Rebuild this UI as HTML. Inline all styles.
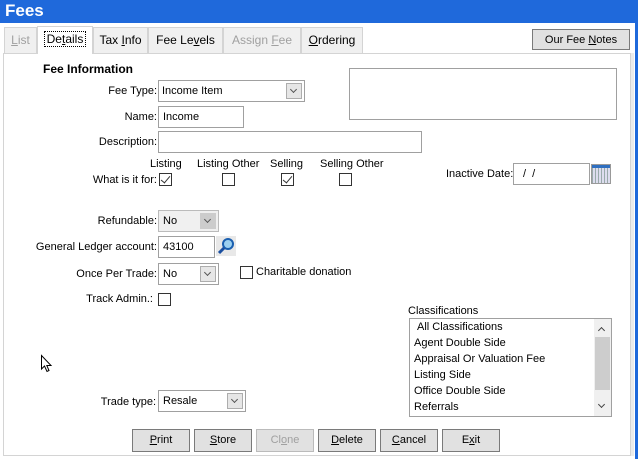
<!DOCTYPE html>
<html><head><style>
*{box-sizing:border-box;margin:0;padding:0}
body{width:638px;height:459px;background:#fff;font-family:"Liberation Sans",sans-serif;font-size:11px;color:#000;position:relative;overflow:hidden}
.a{position:absolute;white-space:nowrap}
.box{position:absolute;border:1px solid #a0a0a0;background:#fff}
.tab{position:absolute;top:27px;height:26px;background:#f0f0f0;border:1px solid #d4d4d4;border-bottom:none;font-size:12px;text-align:center;line-height:25px}
.btn{position:absolute;background:#e1e1e1;border:1px solid #7a7a7a;text-align:center;font-size:11px;line-height:20px}
.dd{position:absolute;top:2px;right:2px;width:16px;height:16px;border:1px solid #adadad;background:#e6e6e6}
.dd:after{content:"";position:absolute;left:4px;top:3px;width:4px;height:4px;border-right:1px solid #555;border-bottom:1px solid #555;transform:rotate(45deg)}
.cb{position:absolute;width:13px;height:13px;border:1px solid #333;background:#fff}
.ck:after{content:"";position:absolute;left:3px;top:0px;width:4px;height:8px;border-right:1px solid #333;border-bottom:1px solid #333;transform:rotate(40deg)}
.r{text-align:right}
u{text-decoration:underline}
.ar{position:absolute;left:5px;width:5px;height:5px;border-left:1px solid #444;border-top:1px solid #444}
</style></head><body>
<div class="a" style="left:0;top:0;width:638px;height:23px;background:#1f69db"></div>
<div class="a" style="left:5px;top:1px;color:#fff;font-weight:bold;font-size:17px">Fees</div>
<div class="a" style="left:635px;top:0;width:3px;height:459px;background:#1f69db"></div>
<div class="a" style="left:3px;top:53px;width:628px;height:403px;border:1px solid #d4d4d4;background:#fff"></div>
<div class="a" style="left:631px;top:53px;width:3px;height:403px;background:#ececec"></div>
<div class="tab" style="left:4px;width:33px;color:#a0a0a0"><u>L</u>ist</div>
<div class="tab" style="left:37px;top:26px;width:56px;height:28px;background:#fff;z-index:2"><span style="border:1px dotted #000;padding:0 2px">De<u>t</u>ails</span></div>
<div class="tab" style="left:93px;width:55px">Tax <u>I</u>nfo</div>
<div class="tab" style="left:148px;width:75px">Fee Le<u>v</u>els</div>
<div class="tab" style="left:223px;width:78px;color:#a0a0a0">Assign <u>F</u>ee</div>
<div class="tab" style="left:301px;width:62px"><u>O</u>rdering</div>
<div class="btn" style="left:532px;top:29px;width:98px;height:21px;font-size:11px">Our Fee <u>N</u>otes</div>

<div class="a" style="left:43px;top:62px;font-weight:bold;font-size:12px">Fee Information</div>
<div class="a r" style="left:60px;width:97px;top:85px">Fee Type:</div>
<div class="box" style="left:158px;top:80px;width:147px;height:22px"><span class="a" style="left:3px;top:4px">Income Item</span><div class="dd"></div></div>
<div class="a r" style="left:60px;width:97px;top:111px">Name:</div>
<div class="box" style="left:158px;top:106px;width:86px;height:22px"><span class="a" style="left:4px;top:4px">Income</span></div>
<div class="a r" style="left:40px;width:117px;top:136px">Description:</div>
<div class="box" style="left:158px;top:131px;width:264px;height:22px"></div>
<div class="box" style="left:349px;top:68px;width:268px;height:52px"></div>

<div class="a" style="left:150px;top:158px">Listing</div>
<div class="a" style="left:197px;top:158px">Listing Other</div>
<div class="a" style="left:270px;top:158px">Selling</div>
<div class="a" style="left:320px;top:158px">Selling Other</div>
<div class="a r" style="left:40px;width:117px;top:174px">What is it for:</div>
<div class="cb ck" style="left:159px;top:173px"></div>
<div class="cb" style="left:222px;top:173px"></div>
<div class="cb ck" style="left:281px;top:173px"></div>
<div class="cb" style="left:339px;top:173px"></div>

<div class="a" style="left:446px;top:168px">Inactive Date:</div>
<div class="box" style="left:513px;top:163px;width:77px;height:22px"><span class="a" style="left:9px;top:4px">/&nbsp;&nbsp;/</span></div>
<div class="a" style="left:591px;top:164px;width:20px;height:20px;border:1px solid #999;background:repeating-linear-gradient(90deg,#9aa 0 1px,#dde 1px 3px)"><div style="height:3px;background:#2f6fc0"></div></div>

<div class="a r" style="left:40px;width:117px;top:215px">Refundable:</div>
<div class="box" style="left:158px;top:210px;width:61px;height:22px;background:#f0f0f0;border-color:#bbb"><span class="a" style="left:4px;top:4px">No</span><div class="dd" style="background:#ccc;border-color:#ccc"></div></div>
<div class="a r" style="left:20px;width:137px;top:241px">General Ledger account:</div>
<div class="box" style="left:158px;top:236px;width:57px;height:22px"><span class="a" style="left:4px;top:4px">43100</span></div>
<svg class="a" style="left:216px;top:236px" width="20" height="20"><rect x="0" y="0" width="20" height="20" fill="#e8e8e8"/><circle cx="12" cy="8" r="5" fill="#9cd0f0" stroke="#1a5fb0" stroke-width="2"/><line x1="8" y1="12" x2="3" y2="17" stroke="#1a4fa0" stroke-width="3"/></svg>
<div class="a r" style="left:40px;width:117px;top:268px">Once Per Trade:</div>
<div class="box" style="left:158px;top:263px;width:61px;height:22px"><span class="a" style="left:4px;top:4px">No</span><div class="dd"></div></div>
<div class="cb" style="left:240px;top:266px"></div>
<div class="a" style="left:256px;top:266px">Charitable donation</div>
<div class="a r" style="left:40px;width:113px;top:293px">Track Admin.:</div>
<div class="cb" style="left:158px;top:293px"></div>

<svg class="a" style="left:40px;top:354px" width="14" height="20"><path d="M1.5 1.5 L1.5 15 L4.5 12 L7 17.5 L9 16.5 L6.8 11.5 L11 11.5 Z" fill="#fff" stroke="#000" stroke-width="1"/></svg>

<div class="a" style="left:408px;top:305px">Classifications</div>
<div class="box" style="left:409px;top:318px;width:203px;height:99px;line-height:16px">
<div style="padding-left:7px">All Classifications</div>
<div style="padding-left:4px">Agent Double Side</div>
<div style="padding-left:4px">Appraisal Or Valuation Fee</div>
<div style="padding-left:4px">Listing Side</div>
<div style="padding-left:4px">Office Double Side</div>
<div style="padding-left:4px">Referrals</div>
<div class="a" style="right:0;top:0;width:17px;height:97px;background:#f0f0f0"><div style="position:absolute;top:18px;left:1px;width:15px;height:53px;background:#cdcdcd"></div><div class="ar" style="top:9px;transform:rotate(45deg)"></div><div class="ar" style="top:83px;transform:rotate(225deg)"></div></div>
</div>

<div class="a r" style="left:60px;width:96px;top:396px">Trade type:</div>
<div class="box" style="left:158px;top:390px;width:88px;height:22px"><span class="a" style="left:4px;top:4px">Resale</span><div class="dd"></div></div>

<div class="btn" style="left:132px;top:429px;width:58px;height:23px"><u>P</u>rint</div>
<div class="btn" style="left:194px;top:429px;width:58px;height:23px"><u>S</u>tore</div>
<div class="btn" style="left:256px;top:429px;width:58px;height:23px;color:#a0a0a0;border-color:#bbb">Cl<u>o</u>ne</div>
<div class="btn" style="left:318px;top:429px;width:58px;height:23px"><u>D</u>elete</div>
<div class="btn" style="left:380px;top:429px;width:58px;height:23px"><u>C</u>ancel</div>
<div class="btn" style="left:442px;top:429px;width:58px;height:23px">E<u>x</u>it</div>
</body></html>
